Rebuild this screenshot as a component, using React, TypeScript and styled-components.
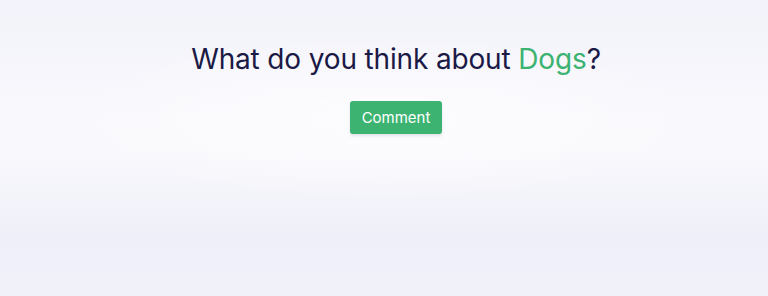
import React from 'react'
import styled, { createGlobalStyle } from 'styled-components'

const GlobalStyle = createGlobalStyle`
  html, body {
    margin: 0;
    padding: 0;
  }
  body {
    font-family: Inter, "Noto Sans", sans-serif;
  }
`

const Page = styled.div`
  height: 296px;
  display: flex;
  flex-direction: column;
  align-items: center;
  padding: 42px 0 0 24px;
  box-sizing: border-box;
  background:
    radial-gradient(ellipse 60% 40% at 50% 40%, rgba(255, 255, 255, 0.7), rgba(255, 255, 255, 0) 70%),
    linear-gradient(180deg, #f2f2fa 0%, #f8f8fd 35%, #f9f9fd 50%, #efeff9 80%, #f1f1fa 100%);
`

const Title = styled.h1`
  margin: 0;
  font-size: 28px;
  line-height: 34px;
  font-weight: 400;
  color: #1b1945;
  letter-spacing: -0.15px;
`

const Accent = styled.span`
  color: #3cb371;
`

const Button = styled.button`
  margin-top: 25px;
  border: none;
  border-radius: 3px;
  background: #3cb371;
  color: #ffffff;
  font-family: inherit;
  font-size: 15px;
  line-height: 23px;
  padding: 5px 12px;
  box-shadow: 0 2px 3px rgba(40, 40, 80, 0.12);
  cursor: pointer;
`

const App = () => {
  return (
    <Page>
      <GlobalStyle />
      <Title>
        What do you think about <Accent>Dogs</Accent>?
      </Title>
      <Button>Comment</Button>
    </Page>
  )
}

export default App
